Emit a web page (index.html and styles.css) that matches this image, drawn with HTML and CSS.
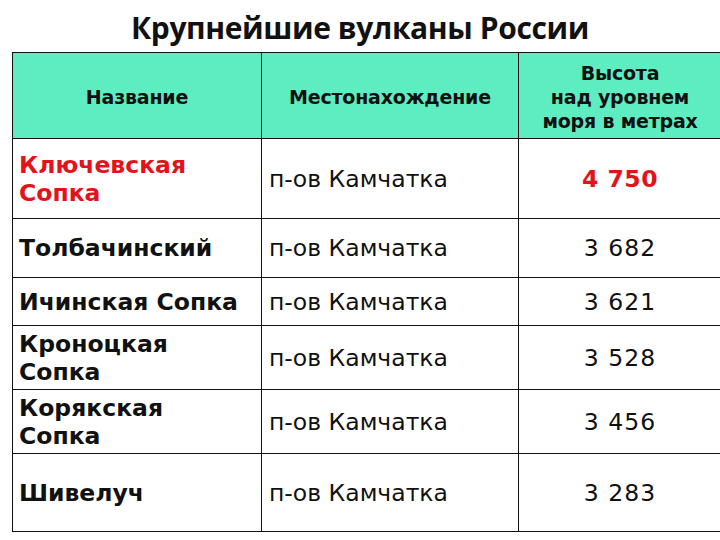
FILE: index.html
```html
<!DOCTYPE html>
<html lang="ru">
<head>
<meta charset="utf-8">
<link rel="stylesheet" href="styles.css">
</head>
<body>
<h1 class="title">Крупнейшие вулканы России</h1>
<table class="volcanoes">
  <thead>
    <tr class="head">
      <th class="c-name">Название</th>
      <th class="c-loc">Местонахождение</th>
      <th class="c-h">Высота<br>над уровнем<br>моря в метрах</th>
    </tr>
  </thead>
  <tbody>
    <tr class="r1">
      <td class="name red">Ключевская<br>Сопка</td>
      <td class="loc">п-ов Камчатка</td>
      <td class="h red bold">4 750</td>
    </tr>
    <tr class="r2">
      <td class="name">Толбачинский</td>
      <td class="loc">п-ов Камчатка</td>
      <td class="h">3 682</td>
    </tr>
    <tr class="r3">
      <td class="name">Ичинская Сопка</td>
      <td class="loc">п-ов Камчатка</td>
      <td class="h">3 621</td>
    </tr>
    <tr class="r4">
      <td class="name">Кроноцкая<br>Сопка</td>
      <td class="loc">п-ов Камчатка</td>
      <td class="h">3 528</td>
    </tr>
    <tr class="r5">
      <td class="name">Корякская<br>Сопка</td>
      <td class="loc">п-ов Камчатка</td>
      <td class="h">3 456</td>
    </tr>
    <tr class="r6">
      <td class="name">Шивелуч</td>
      <td class="loc">п-ов Камчатка</td>
      <td class="h">3 283</td>
    </tr>
  </tbody>
</table>
</body>
</html>
```
FILE: styles.css
```css
html, body {
  margin: 0;
  padding: 0;
  background: #ffffff;
  width: 720px;
  height: 540px;
  overflow: hidden;
}
.title {
  margin: 0;
  height: 52px;
  box-sizing: border-box;
  padding-top: 10px;
  text-align: center;
  font-family: "Open Sans", sans-serif;
  font-weight: 700;
  font-size: 30px;
  line-height: 36px;
  color: #111;
  letter-spacing: -0.4px;
}
.volcanoes {
  margin-left: 12px;
  border-collapse: collapse;
  table-layout: fixed;
  width: 710px;
  font-family: "DejaVu Sans", Verdana, sans-serif;
  color: #111;
}
.volcanoes th, .volcanoes td {
  border: 1.5px solid #111;
  padding: 0;
}
.c-name { width: 248px; }
.c-loc { width: 256px; }
.head {
  height: 86px;
  background: #5eedc0;
}
.head th {
  font-family: "DejaVu Sans", sans-serif;
  font-weight: 700;
  font-size: 19px;
  line-height: 24px;
  letter-spacing: -0.2px;
  text-align: center;
  vertical-align: middle;
}
.head .c-name { padding-top: 3px; }
.head .c-loc { padding-top: 3px; }
.head .c-h { padding-top: 2px; }
.r1 { height: 80px; }
.r2 { height: 59px; }
.r3 { height: 48px; }
.r4 { height: 64px; }
.r5 { height: 64px; }
.r6 { height: 78px; }
.name {
  font-weight: 700;
  font-size: 23.5px;
  line-height: 28px;
  padding-left: 6px !important;
  text-align: left;
  vertical-align: middle;
}
.loc {
  font-size: 23.5px;
  padding-left: 7px !important;
  vertical-align: middle;
}
.h {
  font-size: 23.5px;
  letter-spacing: 1px;
  text-align: center;
  vertical-align: middle;
}
.red { color: #e3131b; }
.bold { font-weight: 700; letter-spacing: 0.5px; }
```
